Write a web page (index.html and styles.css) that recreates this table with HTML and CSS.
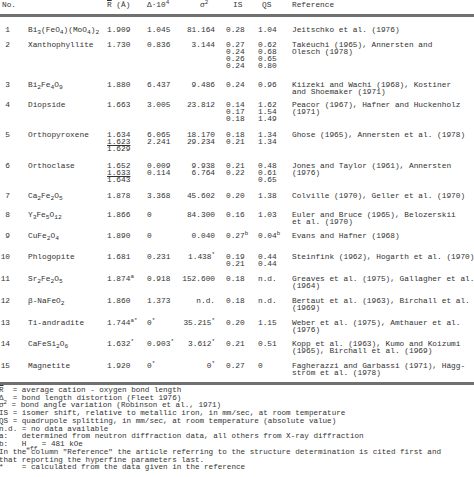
FILE: index.html
```html
<!DOCTYPE html>
<html>
<head>
<meta charset="utf-8">
<link rel="stylesheet" href="styles.css">
</head>
<body>
<div class="page">
<table class="data">
<colgroup>
<col class="c-no"><col class="c-name"><col class="c-r"><col class="c-d"><col class="c-s"><col class="c-is"><col class="c-qs"><col class="c-ref">
</colgroup>
<thead>
<tr>
<th class="h-no">No.</th>
<th class="h-name"></th>
<th class="h-r"><span class="ovl">R</span> (Å)</th>
<th class="h-d">Δ·10<sup>4</sup></th>
<th class="h-s">σ<sup>2</sup></th>
<th class="h-is">IS</th>
<th class="h-qs">QS</th>
<th class="h-ref">Reference</th>
</tr>
</thead>
<tbody>
<tr class="p10">
<td class="no">1</td><td class="name">Bi<sub>3</sub>(FeO<sub>4</sub>)(MoO<sub>4</sub>)<sub>2</sub></td><td class="r">1.909</td><td class="d">1.045</td><td class="s">81.164</td><td class="is">0.28</td><td class="qs">1.04</td><td class="ref">Jeitschko et al. (1976)</td>
</tr>
<tr class="p8">
<td class="no">2</td><td class="name">Xanthophyllite</td><td class="r">1.730</td><td class="d">0.836</td><td class="s">3.144</td><td class="is">0.27<br>0.24<br>0.26<br>0.24</td><td class="qs">0.62<br>0.68<br>0.65<br>0.80</td><td class="ref">Takéuchi (1965), Annersten and<br>Olesch (1978)</td>
</tr>
<tr class="p12">
<td class="no">3</td><td class="name">Bi<sub>2</sub>Fe<sub>4</sub>O<sub>9</sub></td><td class="r">1.880</td><td class="d">6.437</td><td class="s">9.486</td><td class="is">0.24</td><td class="qs">0.96</td><td class="ref">Kiizeki and Wachi (1968), Kostiner<br>and Shoemaker (1971)</td>
</tr>
<tr class="p6">
<td class="no">4</td><td class="name">Diopside</td><td class="r">1.663</td><td class="d">3.005</td><td class="s">23.812</td><td class="is">0.14<br>0.17<br>0.18</td><td class="qs">1.62<br>1.54<br>1.49</td><td class="ref">Peacor (1967), Hafner and Huckenholz<br>(1971)</td>
</tr>
<tr class="p9">
<td class="no">5</td><td class="name">Orthopyroxene</td><td class="r">1.634<br><span class="ul">1.623</span><br>1.629</td><td class="d">6.065<br>2.241</td><td class="s">18.170<br>29.234</td><td class="is">0.18<br>0.21</td><td class="qs">1.34<br>1.34</td><td class="ref">Ghose (1965), Annersten et al. (1978)</td>
</tr>
<tr class="p10">
<td class="no">6</td><td class="name">Orthoclase</td><td class="r">1.652<br><span class="ul">1.633</span><br>1.643</td><td class="d">0.009<br>0.114</td><td class="s">9.938<br>6.764</td><td class="is">0.21<br>0.22</td><td class="qs">0.48<br>0.61<br>0.65</td><td class="ref">Jones and Taylor (1961), Annersten<br>(1976)</td>
</tr>
<tr class="p9">
<td class="no">7</td><td class="name">Ca<sub>2</sub>Fe<sub>2</sub>O<sub>5</sub></td><td class="r">1.878</td><td class="d">3.368</td><td class="s">45.602</td><td class="is">0.20</td><td class="qs">1.38</td><td class="ref">Colville (1970), Geller et al. (1970)</td>
</tr>
<tr class="p12">
<td class="no">8</td><td class="name">Y<sub>3</sub>Fe<sub>5</sub>O<sub>12</sub></td><td class="r">1.866</td><td class="d">0</td><td class="s">84.300</td><td class="is">0.16</td><td class="qs">1.03</td><td class="ref">Euler and Bruce (1965), Belozerskii<br>et al. (1970)</td>
</tr>
<tr class="p7">
<td class="no">9</td><td class="name">CuFe<sub>2</sub>O<sub>4</sub></td><td class="r">1.890</td><td class="d">0</td><td class="s">0.040</td><td class="is">0.27<sup>b</sup></td><td class="qs">0.04<sup>b</sup></td><td class="ref">Evans and Hafner (1968)</td>
</tr>
<tr class="p14">
<td class="no">10</td><td class="name">Phlogopite</td><td class="r">1.681</td><td class="d">0.231</td><td class="s">1.438<sup>*</sup></td><td class="is">0.19<br>0.21</td><td class="qs">0.44<br>0.44</td><td class="ref">Steinfink (1962), Hogarth et al. (1970)</td>
</tr>
<tr class="p8">
<td class="no">11</td><td class="name">Sr<sub>2</sub>Fe<sub>2</sub>O<sub>5</sub></td><td class="r">1.874<sup>a</sup></td><td class="d">0.918</td><td class="s">152.600</td><td class="is">0.18</td><td class="qs">n.d.</td><td class="ref">Greaves et al. (1975), Gallagher et al.<br>(1964)</td>
</tr>
<tr class="p8">
<td class="no">12</td><td class="name">β-NaFeO<sub>2</sub></td><td class="r">1.860</td><td class="d">1.373</td><td class="s">n.d.</td><td class="is">0.18</td><td class="qs">n.d.</td><td class="ref">Bertaut et al. (1963), Birchall et al.<br>(1969)</td>
</tr>
<tr class="p8">
<td class="no">13</td><td class="name">Ti-andradite</td><td class="r">1.744<sup>a*</sup></td><td class="d">0<sup>*</sup></td><td class="s">35.215<sup>*</sup></td><td class="is">0.20</td><td class="qs">1.15</td><td class="ref">Weber et al. (1975), Amthauer et al.<br>(1976)</td>
</tr>
<tr class="p7">
<td class="no">14</td><td class="name">CaFeSi<sub>2</sub>O<sub>6</sub></td><td class="r">1.632<sup>*</sup></td><td class="d">0.903<sup>*</sup></td><td class="s">3.612<sup>*</sup></td><td class="is">0.21</td><td class="qs">0.51</td><td class="ref">Kopp et al. (1963), Kumo and Koizumi<br>(1965), Birchall et al. (1969)</td>
</tr>
<tr class="p8 last">
<td class="no">15</td><td class="name">Magnetite</td><td class="r">1.920</td><td class="d">0<sup>*</sup></td><td class="s">0<sup>*</sup></td><td class="is">0.27</td><td class="qs">0</td><td class="ref">Fagherazzi and Garbassi (1971), Hägg-<br>ström et al. (1978)</td>
</tr>
</tbody>
</table>
<div class="notes">
<div class="note"><span class="ovl">R</span>  = average cation - oxygen bond length</div>
<div class="note">Δ  = bond length distortion (Fleet 1976)</div>
<div class="note">σ<sup>2</sup> = bond angle variation (Robinson et al., 1971)</div>
<div class="note">IS = isomer shift, relative to metallic iron, in mm/sec, at room temperature</div>
<div class="note">QS = quadrupole splitting, in mm/sec, at room temperature (absolute value)</div>
<div class="note">n.d. = no data available</div>
<div class="note">a:   determined from neutron diffraction data, all others from X-ray diffraction</div>
<div class="note">b:   H<sub class="lo">eff</sub> = 481 kOe</div>
<div class="note">In the column "Reference" the article referring to the structure determination is cited first and</div>
<div class="note">that reporting the hyperfine parameters last.</div>
<div class="note">*    = calculated from the data given in the reference</div>
</div>
</div>
</body>
</html>
```

FILE: styles.css
```css
html, body {
  margin: 0;
  padding: 0;
  background: #ffffff;
}

body {
  width: 474px;
  height: 477px;
  overflow: hidden;
  color: #333333;
  font-family: "Liberation Mono", "Courier New", monospace;
  font-size: 7.8px;
}

.page {
  width: 474px;
}

.data {
  width: 474px;
  table-layout: fixed;
  border-collapse: collapse;
  border-spacing: 0;
}

.c-no { width: 28px; }
.c-name { width: 79px; }
.c-r { width: 40px; }
.c-d { width: 31px; }
.c-s { width: 37px; }
.c-is { width: 40px; }
.c-qs { width: 37px; }
.c-ref { width: 182px; }

.data th,
.data td {
  padding: 0;
  line-height: 7px;
  vertical-align: top;
  white-space: nowrap;
  text-align: left;
  font-weight: normal;
}

.data thead th {
  padding-top: 2px;
  padding-bottom: 5px;
  border-bottom: 3px solid #707070;
}

.data .h-no { padding-left: 2px; }
.data .h-s { padding-left: 22px; }
.data .h-is { padding-left: 18px; }
.data .h-qs { padding-left: 7px; }

.data .no {
  text-align: right;
  padding-right: 18px;
}

.data .s { text-align: right; }
.data .is { padding-left: 11px; }
.data .qs { padding-left: 3px; }

.p6 td { padding-top: 6px; }
.p7 td { padding-top: 7px; }
.p8 td { padding-top: 8px; }
.p9 td { padding-top: 9px; }
.p10 td { padding-top: 10px; }
.p12 td { padding-top: 12px; }
.p14 td { padding-top: 14px; }

.data tr.last td {
  padding-bottom: 5px;
  border-bottom: 3px solid #707070;
}

.ovl {
  text-decoration: overline;
}

.ul {
  text-decoration: underline;
  text-underline-offset: 1px;
}

sub {
  font-size: 0.8em;
  vertical-align: -2px;
  line-height: 0;
}

sup {
  font-size: 0.75em;
  vertical-align: 3px;
  line-height: 0;
}

sub.lo {
  vertical-align: -4px;
}

.notes {
  margin-top: 2px;
  margin-left: -1px;
  font-size: 7.6px;
}

.note {
  line-height: 7.7px;
  white-space: pre;
}
```
